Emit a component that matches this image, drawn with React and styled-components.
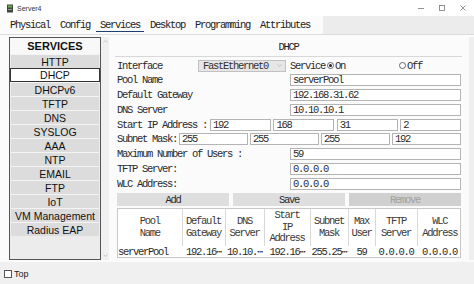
import React from 'react';
import styled, { createGlobalStyle } from 'styled-components';

const mono = `"Liberation Mono", "DejaVu Sans Mono", monospace`;
const sans = `"Liberation Sans", Arial, sans-serif`;

const Global = createGlobalStyle`
  html, body { margin: 0; padding: 0; background: #f0f0f0; }
  body { width: 474px; height: 284px; overflow: hidden; }
`;

const Window = styled.div`
  width: 474px;
  height: 284px;
  display: flex;
  flex-direction: column;
  background: #f0f0f0;
  overflow: hidden;
`;

const TitleBar = styled.div`
  height: 16px;
  flex: none;
  background: #fff;
  display: flex;
  align-items: center;
  padding: 0 8px 0 6px;
  box-sizing: border-box;
`;

const TitleText = styled.span`
  font-family: ${sans};
  font-size: 7px;
  color: #333;
  margin-left: 3px;
`;

const Controls = styled.div`
  margin-left: auto;
  display: flex;
  align-items: center;
  gap: 15px;
`;

const TabBar = styled.div`
  height: 18px;
  flex: none;
  display: flex;
  background: #ececec;
  border-bottom: 1px solid #dcdcdc;
`;

const TabStrip = styled.div`
  display: flex;
  background: #fbfbfb;
  padding: 0 8px 0 5px;
`;

const Tab = styled.div`
  position: relative;
  padding: 0 5px;
  font-family: ${mono};
  font-size: 10.5px;
  letter-spacing: -1.3px;
  line-height: 18px;
  color: #222;
  &::after {
    content: '';
    display: ${({ $active }) => ($active ? 'block' : 'none')};
    position: absolute;
    left: 1px;
    right: 1px;
    bottom: 2px;
    height: 1.5px;
    background: #1e3f6e;
  }
`;

const Body = styled.div`
  flex: none;
  height: 227px;
  box-sizing: border-box;
  display: flex;
  gap: 6px;
  padding: 2px 3px 2px 9px;
  background: #fbfbfb;
`;

const ServiceCol = styled.div`
  width: 100px;
  display: flex;
  flex: none;
`;

const ListBox = styled.div`
  width: 92px;
  box-sizing: border-box;
  border: 1px solid #555;
  background: #ececec;
  display: flex;
  flex-direction: column;
`;

const ListHeader = styled.div`
  height: 16px;
  flex: none;
  display: flex;
  align-items: center;
  justify-content: center;
  background: #f8f8f8;
  font-family: ${sans};
  font-weight: 700;
  font-size: 11px;
  color: #111;
`;

const ListItem = styled.div`
  height: 14px;
  flex: none;
  box-sizing: border-box;
  display: flex;
  align-items: center;
  justify-content: center;
  font-family: ${sans};
  font-size: 10.5px;
  color: #111;
  background: ${({ $selected }) => ($selected ? '#fff' : '#dcdcdc')};
  border: ${({ $selected }) => ($selected ? '1px solid #333' : 'none')};
  border-top: ${({ $selected }) => ($selected ? '1px solid #333' : '1px solid #f4f4f4')};
  margin: 0 ${({ $selected }) => ($selected ? '0' : '1px')};
`;

const ScrollTrack = styled.div`
  width: 8px;
  flex: none;
  background: #f0f0f0;
  display: flex;
  flex-direction: column;
  justify-content: space-between;
  align-items: center;
  padding: 3px 0;
  box-sizing: border-box;
`;

const Panel = styled.div`
  width: 347px;
  flex: none;
  display: flex;
  flex-direction: column;
`;

const Heading = styled.div`
  height: 20px;
  flex: none;
  box-sizing: border-box;
  border-bottom: 1px solid #d8d8d8;
  display: flex;
  align-items: center;
  justify-content: center;
  padding-top: 1px;
  font-family: ${mono};
  font-size: 10.5px;
  letter-spacing: -1.3px;
  color: #222;
`;

const Form = styled.div`
  padding: 1.5px 1px 0 2px;
  display: flex;
  flex-direction: column;
  font-family: ${mono};
  font-size: 10.5px;
  letter-spacing: -1.3px;
  color: #2a2a2a;
`;

const Row = styled.div`
  height: ${({ $h }) => $h || '14.75px'};
  display: flex;
  align-items: center;
  gap: ${({ $gap }) => $gap || '0'};
`;

const FieldRow = styled.div`
  height: 14.75px;
  display: grid;
  grid-template-columns: 173px 1fr;
  align-items: center;
`;

const Label = styled.span`
  white-space: nowrap;
  width: ${({ $w }) => $w || 'auto'};
  flex: none;
  margin-right: ${({ $mr }) => $mr || '0'};
`;

const Input = styled.input`
  height: 12px;
  min-width: 0;
  flex: 1;
  box-sizing: border-box;
  border: 1px solid #b4b4b4;
  background: #fff;
  padding: 0 2px;
  margin: 0;
  font-family: ${mono};
  font-size: 10.5px;
  letter-spacing: -1.3px;
  color: #2a2a2a;
  outline: none;
`;

const Select = styled.div`
  width: 88px;
  height: 12px;
  flex: none;
  box-sizing: border-box;
  border: 1px solid #c0c0c0;
  background: #e6e6e6;
  display: flex;
  align-items: center;
  padding-left: 4px;
  color: #333;
  span { flex: 1; }
`;

const Radio = styled.span`
  width: 7px;
  height: 7px;
  box-sizing: border-box;
  border-radius: 50%;
  border: 1px solid #666;
  background: #fff;
  display: inline-flex;
  align-items: center;
  justify-content: center;
  margin: 0 1px 0 2px;
  &::after {
    content: '';
    display: ${({ $on }) => ($on ? 'block' : 'none')};
    width: 3px;
    height: 3px;
    border-radius: 50%;
    background: #222;
  }
`;

const ButtonRow = styled.div`
  margin-top: 2px;
  height: 13px;
  display: grid;
  grid-template-columns: 1fr 1fr 1fr;
  gap: 4px;
`;

const Button = styled.button`
  margin: 0;
  padding: 0;
  border: none;
  height: 13px;
  background: ${({ disabled }) => (disabled ? '#d0d0d0' : '#dedede')};
  color: ${({ disabled }) => (disabled ? '#a0a0a0' : '#2a2a2a')};
  font-family: ${mono};
  font-size: 10.5px;
  letter-spacing: -1.3px;
`;

const TableWrap = styled.div`
  margin-top: 2px;
  height: 50px;
  box-sizing: border-box;
  border: 1px solid #c8c8c8;
  background: #fff;
  overflow: hidden;
`;

const Table = styled.table`
  width: 100%;
  table-layout: fixed;
  border-collapse: collapse;
  font-family: ${mono};
  font-size: 10.5px;
  letter-spacing: -1.3px;
  color: #3a3a3a;
`;

const Th = styled.th`
  height: 37px;
  padding: 0;
  font-weight: 400;
  line-height: 11.5px;
  text-align: center;
  vertical-align: middle;
  overflow: hidden;
  border-right: 1px solid #d8d8d8;
  &:last-child { border-right: none; }
`;

const Td = styled.td`
  height: 12px;
  padding: 0;
  line-height: 12px;
  text-align: ${({ $left }) => ($left ? 'left' : 'center')};
  white-space: nowrap;
  overflow: hidden;
  color: #2a2a2a;
`;

const SideTrack = styled.div`
  width: 8px;
  flex: none;
  margin-left: 1px;
  background: #efefef;
`;

const Footer = styled.div`
  flex: 1;
  display: flex;
  align-items: center;
  padding: 2px 0 0 4px;
  background: #f0f0f0;
`;

const CheckBox = styled.span`
  width: 8px;
  height: 8px;
  box-sizing: border-box;
  border: 1px solid #555;
  background: #fff;
`;

const FooterLabel = styled.span`
  font-family: ${sans};
  font-size: 9px;
  color: #222;
  margin-left: 2px;
`;

const tabs = ['Physical', 'Config', 'Services', 'Desktop', 'Programming', 'Attributes'];
const services = ['HTTP', 'DHCP', 'DHCPv6', 'TFTP', 'DNS', 'SYSLOG', 'AAA', 'NTP', 'EMAIL', 'FTP', 'IoT', 'VM Management', 'Radius EAP'];
const columns = [
  { w: 64, h: ['Pool', 'Name'], d: 'serverPool' },
  { w: 43, h: ['Default', 'Gateway'], d: '192.16⋯' },
  { w: 39, h: ['DNS', 'Server'], d: '10.10.⋯' },
  { w: 46, h: ['Start', 'IP', 'Address'], d: '192.16⋯' },
  { w: 38, h: ['Subnet', 'Mask'], d: '255.25⋯' },
  { w: 27, h: ['Max', 'User'], d: '59' },
  { w: 42, h: ['TFTP', 'Server'], d: '0.0.0.0' },
  { w: 45, h: ['WLC', 'Address'], d: '0.0.0.0' },
];

function ServerIcon() {
  return (
    <svg width="8" height="9" viewBox="0 0 8 9">
      <rect x="1" y="0.5" width="6" height="8" fill="#3c4a3c" />
      <rect x="2" y="1.5" width="4" height="2" fill="#6fae4a" />
      <rect x="2" y="5" width="4" height="1" fill="#9aa59a" />
    </svg>
  );
}

function WinControls() {
  return (
    <Controls>
      <svg width="6" height="6" viewBox="0 0 6 6"><path d="M0 3.5h6" stroke="#777" strokeWidth="0.8" /></svg>
      <svg width="6" height="6" viewBox="0 0 6 6"><rect x="0.5" y="0.5" width="5" height="5" fill="none" stroke="#777" strokeWidth="0.8" /></svg>
      <svg width="6" height="6" viewBox="0 0 6 6"><path d="M0.5 0.5l5 5M5.5 0.5l-5 5" stroke="#777" strokeWidth="0.8" /></svg>
    </Controls>
  );
}

function Chevron({ up }) {
  return (
    <svg width="5" height="3" viewBox="0 0 5 3">
      <path d={up ? 'M0.5 2.5L2.5 0.5L4.5 2.5' : 'M0.5 0.5L2.5 2.5L4.5 0.5'} fill="none" stroke="#b8b8b8" strokeWidth="0.8" />
    </svg>
  );
}

export default function App() {
  return (
    <Window>
      <Global />
      <TitleBar>
        <ServerIcon />
        <TitleText>Server4</TitleText>
        <WinControls />
      </TitleBar>
      <TabBar>
        <TabStrip>
          {tabs.map((t) => (
            <Tab key={t} $active={t === 'Services'}>{t}</Tab>
          ))}
        </TabStrip>
      </TabBar>
      <Body>
        <ServiceCol>
          <ListBox>
            <ListHeader>SERVICES</ListHeader>
            {services.map((s) => (
              <ListItem key={s} $selected={s === 'DHCP'}>{s}</ListItem>
            ))}
          </ListBox>
          <ScrollTrack>
            <Chevron up />
            <Chevron />
          </ScrollTrack>
        </ServiceCol>
        <Panel>
          <Heading>DHCP</Heading>
          <Form>
            <Row $h="14.5px">
              <Label $w="81px">Interface</Label>
              <Select>
                <span>FastEthernet0</span>
                <Chevron />
                <span style={{ flex: 'none', width: 3 }} />
              </Select>
              <Label style={{ marginLeft: 4 }}>Service</Label>
              <Radio $on />
              <Label $w="62px">On</Label>
              <Radio />
              <Label>Off</Label>
            </Row>
            <FieldRow>
              <Label>Pool Name</Label>
              <Input readOnly value="serverPool" />
            </FieldRow>
            <FieldRow>
              <Label>Default Gateway</Label>
              <Input readOnly value="192.168.31.62" />
            </FieldRow>
            <FieldRow>
              <Label>DNS Server</Label>
              <Input readOnly value="10.10.10.1" />
            </FieldRow>
            <Row $gap="2.5px">
              <Label $mr="0.5px">Start IP Address :</Label>
              <Input readOnly value="192" />
              <Input readOnly value="168" />
              <Input readOnly value="31" />
              <Input readOnly value="2" />
            </Row>
            <Row $gap="2px">
              <Label>Subnet Mask:</Label>
              <Input readOnly value="255" />
              <Input readOnly value="255" />
              <Input readOnly value="255" />
              <Input readOnly value="192" />
            </Row>
            <FieldRow>
              <Label>Maximum Number of Users :</Label>
              <Input readOnly value="59" />
            </FieldRow>
            <FieldRow>
              <Label>TFTP Server:</Label>
              <Input readOnly value="0.0.0.0" />
            </FieldRow>
            <FieldRow>
              <Label>WLC Address:</Label>
              <Input readOnly value="0.0.0.0" />
            </FieldRow>
            <ButtonRow>
              <Button>Add</Button>
              <Button>Save</Button>
              <Button disabled>Remove</Button>
            </ButtonRow>
            <TableWrap>
              <Table>
                <colgroup>
                  {columns.map((c, i) => <col key={i} style={{ width: c.w }} />)}
                </colgroup>
                <thead>
                  <tr>
                    {columns.map((c, i) => (
                      <Th key={i}>
                        {c.h.map((l, j) => <div key={j}>{l}</div>)}
                      </Th>
                    ))}
                  </tr>
                </thead>
                <tbody>
                  <tr>
                    {columns.map((c, i) => <Td key={i} $left={i === 0}>{c.d}</Td>)}
                  </tr>
                </tbody>
              </Table>
            </TableWrap>
          </Form>
        </Panel>
        <SideTrack />
      </Body>
      <Footer>
        <CheckBox />
        <FooterLabel>Top</FooterLabel>
      </Footer>
    </Window>
  );
}
